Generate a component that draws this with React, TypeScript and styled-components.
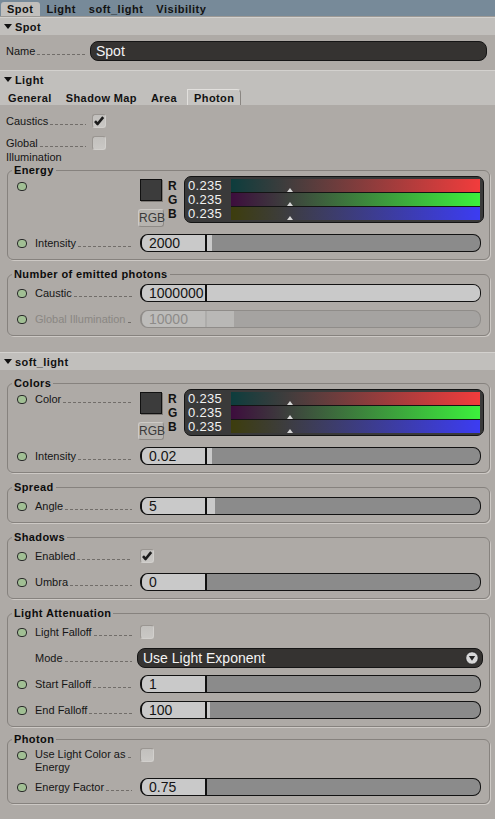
import React from "react";
import styled, { createGlobalStyle } from "styled-components";

const GlobalStyle = createGlobalStyle`
  body {
    margin: 0;
    background: #aeaaa6;
    font-family: "Liberation Sans", Arial, sans-serif;
    font-size: 11px;
    color: #121212;
  }
`;

const Page = styled.div`
  width: 495px;
  min-height: 819px;
  background: #aeaaa6;
`;

const TabBar = styled.div`
  display: flex;
  align-items: flex-end;
  height: 16px;
  padding-left: 1px;
  background: #778a99;
  border-bottom: 1px solid #9c9995;
`;

const Tab = styled.div<{ $active?: boolean }>`
  height: 14px;
  padding: 0 7px 0 6px;
  line-height: 14px;
  font-weight: bold;
  letter-spacing: 0.5px;
  border-radius: 3px 3px 0 0;
  background: ${(p) => (p.$active ? "#c1bfbc" : "transparent")};
`;

const Header = styled.div`
  display: flex;
  align-items: center;
  gap: 3px;
  height: 17px;
  padding-left: 4px;
  background: #c1bfbc;
  border-top: 1px solid #d3d1ce;
  font-weight: bold;
  letter-spacing: 0.4px;
`;

const Caret = styled.span`
  width: 0;
  height: 0;
  border-left: 4px solid transparent;
  border-right: 4px solid transparent;
  border-top: 5px solid #111;
`;

const SubTabs = styled.div`
  display: flex;
  align-items: flex-end;
  height: 17px;
  padding-left: 1px;
  background: #c1bfbc;
`;

const SubTab = styled.div<{ $active?: boolean }>`
  height: 16px;
  padding: 0 6px;
  line-height: 16px;
  font-weight: bold;
  letter-spacing: 0.4px;
  box-sizing: border-box;
  border: 1px solid transparent;
  border-bottom: 0;
  border-radius: 0 4px 0 0;
  ${(p) =>
    p.$active &&
    `
    margin-left: 3px;
    background: #c6c4c1;
    border-color: #e2e0dd #8a8682 transparent #e2e0dd;
  `}
`;

const Body = styled.div<{ $pad: string }>`
  padding: ${(p) => p.$pad};
`;

const TopRow = styled.div<{ $pt?: number }>`
  display: grid;
  grid-template-columns: 84px 1fr;
  align-items: ${(p) => (p.$pt ? "start" : "center")};
  min-height: 26px;
  padding: ${(p) => p.$pt ?? 0}px 8px 0 6px;
  box-sizing: border-box;
`;

const Row = styled.div<{ $pt?: number }>`
  display: grid;
  grid-template-columns: 123px 1fr;
  align-items: ${(p) => (p.$pt ? "start" : "center")};
  min-height: 26px;
  padding-top: ${(p) => p.$pt ?? 0}px;
  box-sizing: border-box;
`;

const LabelArea = styled.div`
  display: flex;
  align-items: flex-start;
`;

const Dot = styled.span<{ $hidden?: boolean }>`
  flex: none;
  width: 10px;
  height: 9px;
  margin: 3px 8px 0 0;
  box-sizing: border-box;
  border-radius: 4px;
  border: 1px solid ${(p) => (p.$hidden ? "transparent" : "#2a2a2a")};
  background: ${(p) => (p.$hidden ? "transparent" : "#a1bf94")};
`;

const LabelText = styled.div<{ $lh: number; $muted?: boolean }>`
  flex: 1;
  display: flex;
  flex-direction: column;
  line-height: ${(p) => p.$lh}px;
  color: ${(p) => (p.$muted ? "#8a8783" : "#151515")};
`;

const LabelLine = styled.div`
  display: flex;
`;

const Leader = styled.span<{ $end: number }>`
  flex: 1;
  align-self: flex-end;
  height: 1px;
  margin: 0 ${(p) => p.$end}px 3px 2px;
  background: repeating-linear-gradient(90deg, #716d69 0 3px, transparent 3px 5px);
`;

const Group = styled.fieldset<{ $mt?: number }>`
  margin: ${(p) => p.$mt ?? 9}px 5px 0 7px;
  padding: 0 5px 3px 9px;
  border: 1px solid #86827e;
  border-radius: 6px;
  box-shadow: 1px 1px 0 #cdc9c5;
  min-inline-size: 0;
`;

const Legend = styled.legend`
  margin-left: -5px;
  padding: 0 2px;
  font-size: 11px;
  line-height: 11px;
  font-weight: bold;
  letter-spacing: 0.4px;
  color: #0c0c0c;
`;

const DarkField = styled.div<{ $mr?: number; $ml?: number }>`
  display: flex;
  align-items: center;
  justify-content: space-between;
  height: 20px;
  margin: 0 ${(p) => p.$mr ?? 0}px 0 ${(p) => p.$ml ?? 0}px;
  padding: 0 3px 0 5px;
  box-sizing: border-box;
  background: #353331;
  border: 1px solid #151515;
  border-radius: 8px;
  font-size: 14px;
  color: #f4f4f4;
`;

const Check = styled.div<{ $ml?: number }>`
  width: 14px;
  height: 14px;
  margin-left: ${(p) => p.$ml ?? 0}px;
  box-sizing: border-box;
  border-radius: 3px;
  border: 1px solid;
  border-color: #9a9692 #d2d0cd #d2d0cd #9a9692;
  background: linear-gradient(#c2c0bd, #cac8c5);
  display: flex;
  align-items: center;
  justify-content: center;
`;

const SliderBox = styled.div<{ $off?: boolean }>`
  display: flex;
  height: 18px;
  margin-right: 3px;
  box-sizing: border-box;
  border: 1px solid ${(p) => (p.$off ? "#8f8c89" : "#121212")};
  border-left-width: 2px;
  border-radius: 8px;
  overflow: hidden;
  background: ${(p) => (p.$off ? "#a5a3a1" : "#8b8b8b")};
`;

const SliderValue = styled.div<{ $off?: boolean }>`
  width: 63px;
  padding-left: 7px;
  box-sizing: border-box;
  font-size: 14px;
  line-height: 16px;
  background: ${(p) => (p.$off ? "#bdbcba" : "#c9c9c9")};
  color: ${(p) => (p.$off ? "#8d8b89" : "#141414")};
`;

const Thumb = styled.div<{ $off?: boolean }>`
  width: 2px;
  background: ${(p) => (p.$off ? "#adacaa" : "#101010")};
`;

const Track = styled.div`
  flex: 1;
  display: flex;
`;

const Fill = styled.div<{ $off?: boolean }>`
  background: ${(p) => (p.$off ? "#b9b8b6" : "#c9c9c9")};
`;

const ColorBlock = styled.div`
  display: grid;
  grid-template-columns: 123px 24px 20px 1fr;
  margin-bottom: 3px;
`;

const ColorLabel = styled.div`
  padding-top: 3px;
`;

const SwatchCol = styled.div`
  display: flex;
  flex-direction: column;
`;

const Swatch = styled.div`
  width: 22px;
  height: 22px;
  margin-top: 3px;
  box-sizing: border-box;
  background: #3c3c3c;
  border: 1px solid #111;
  box-shadow: 1px 1px 0 #7d7975;
`;

const RgbButton = styled.div`
  width: 26px;
  height: 18px;
  margin: 8px 0 0 -2px;
  box-sizing: border-box;
  border: 1px solid;
  border-color: #cdcac6 #8f8b87 #8f8b87 #cdcac6;
  border-radius: 3px;
  background: #b6b3af;
  font-size: 12px;
  line-height: 16px;
  text-align: center;
  color: #3a3a3a;
`;

const Letters = styled.div`
  display: grid;
  grid-template-rows: repeat(3, 14px);
  padding: 3px 0 0 4px;
  font-size: 12px;
  line-height: 14px;
  font-weight: bold;
`;

const ColorField = styled.div`
  display: grid;
  grid-template-columns: 46px 1fr;
  height: 47px;
  padding: 2px 3px 2px 0;
  box-sizing: border-box;
  background: #3a3a3a;
  border: 1px solid #141414;
  border-radius: 7px;
`;

const Values = styled.div`
  display: grid;
  grid-template-rows: repeat(3, 13px);
  row-gap: 1px;
  padding-left: 3px;
  font-size: 13px;
  line-height: 13px;
  letter-spacing: 0.3px;
  color: #f2f2f2;
`;

const Bars = styled.div`
  display: flex;
  flex-direction: column;
  gap: 1px;
  background: #141414;
`;

const Bar = styled.div<{ $from: string; $to: string }>`
  position: relative;
  height: 13px;
  background: linear-gradient(to right, ${(p) => p.$from}, ${(p) => p.$to});
  &::after {
    content: "";
    position: absolute;
    left: calc(23.5% - 3px);
    bottom: 0;
    border-left: 3px solid transparent;
    border-right: 3px solid transparent;
    border-bottom: 4px solid #d6d6d6;
  }
`;

function CheckMark() {
  return (
    <svg width="12" height="12" viewBox="0 0 12 12">
      <path d="M2 6.2 L4.6 9 L10.2 2.2" fill="none" stroke="#1c1c1c" strokeWidth="2.6" strokeLinejoin="round" />
    </svg>
  );
}

function DropArrow() {
  return (
    <svg width="14" height="14" viewBox="0 0 14 14">
      <circle cx="7" cy="7" r="6.3" fill="#d8d8d8" stroke="#202020" strokeWidth="1" />
      <path d="M3.8 5 H10.2 L7 9.8 Z" fill="#262626" />
    </svg>
  );
}

type LabelProps = { text?: string; second?: string; dot?: boolean; muted?: boolean; lh?: number };

function GroupLabel({ text, second, dot = true, muted, lh = 14 }: LabelProps) {
  return (
    <LabelArea>
      <Dot $hidden={!dot} />
      {text && (
        <LabelText $lh={lh} $muted={muted}>
          <LabelLine>
            {text}
            <Leader $end={8} />
          </LabelLine>
          {second && <div>{second}</div>}
        </LabelText>
      )}
    </LabelArea>
  );
}

function TopLabel({ text, second }: { text: string; second?: string }) {
  return (
    <LabelText $lh={14}>
      <LabelLine>
        {text}
        <Leader $end={4} />
      </LabelLine>
      {second && <div>{second}</div>}
    </LabelText>
  );
}

function Slider({ value, fill, off }: { value: string; fill: number; off?: boolean }) {
  return (
    <SliderBox $off={off}>
      <SliderValue $off={off}>{value}</SliderValue>
      <Thumb $off={off} />
      <Track>
        <Fill $off={off} style={{ width: `${fill}%` }} />
      </Track>
    </SliderBox>
  );
}

function ColorRow({ label }: { label?: string }) {
  return (
    <ColorBlock>
      <ColorLabel>
        <GroupLabel text={label} />
      </ColorLabel>
      <SwatchCol>
        <Swatch />
        <RgbButton>RGB</RgbButton>
      </SwatchCol>
      <Letters>
        <span>R</span>
        <span>G</span>
        <span>B</span>
      </Letters>
      <ColorField>
        <Values>
          <span>0.235</span>
          <span>0.235</span>
          <span>0.235</span>
        </Values>
        <Bars>
          <Bar $from="#0d3d3d" $to="#f23c3c" />
          <Bar $from="#3d0d3d" $to="#3cf03c" />
          <Bar $from="#3d3d0d" $to="#3c3cf2" />
        </Bars>
      </ColorField>
    </ColorBlock>
  );
}

export default function App() {
  return (
    <Page>
      <GlobalStyle />
      <TabBar>
        <Tab $active>Spot</Tab>
        <Tab>Light</Tab>
        <Tab>soft_light</Tab>
        <Tab>Visibility</Tab>
      </TabBar>

      <Header>
        <Caret />
        Spot
      </Header>
      <Body $pad="3px 0 6px">
        <TopRow>
          <TopLabel text="Name" />
          <DarkField>Spot</DarkField>
        </TopRow>
      </Body>

      <Header>
        <Caret />
        Light
      </Header>
      <SubTabs>
        <SubTab>General</SubTab>
        <SubTab>Shadow Map</SubTab>
        <SubTab>Area</SubTab>
        <SubTab $active>Photon</SubTab>
      </SubTabs>
      <Body $pad="3px 0 16px">
        <TopRow>
          <TopLabel text="Caustics" />
          <Check $ml={2}>
            <CheckMark />
          </Check>
        </TopRow>
        <TopRow $pt={2}>
          <TopLabel text="Global" second="Illumination" />
          <Check $ml={2} />
        </TopRow>

        <Group $mt={1}>
          <Legend>Energy</Legend>
          <ColorRow />
          <Row>
            <GroupLabel text="Intensity" />
            <Slider value="2000" fill={2} />
          </Row>
        </Group>

        <Group>
          <Legend>Number of emitted photons</Legend>
          <Row>
            <GroupLabel text="Caustic" />
            <Slider value="1000000" fill={100} />
          </Row>
          <Row>
            <GroupLabel text="Global Illumination" muted />
            <Slider value="10000" fill={10} off />
          </Row>
        </Group>
      </Body>

      <Header>
        <Caret />
        soft_light
      </Header>
      <Body $pad="0 0 16px">
        <Group $mt={8}>
          <Legend>Colors</Legend>
          <ColorRow label="Color" />
          <Row>
            <GroupLabel text="Intensity" />
            <Slider value="0.02" fill={2} />
          </Row>
        </Group>

        <Group>
          <Legend>Spread</Legend>
          <Row>
            <GroupLabel text="Angle" />
            <Slider value="5" fill={3} />
          </Row>
        </Group>

        <Group>
          <Legend>Shadows</Legend>
          <Row>
            <GroupLabel text="Enabled" />
            <Check>
              <CheckMark />
            </Check>
          </Row>
          <Row>
            <GroupLabel text="Umbra" />
            <Slider value="0" fill={0} />
          </Row>
        </Group>

        <Group>
          <Legend>Light Attenuation</Legend>
          <Row>
            <GroupLabel text="Light Falloff" />
            <Check />
          </Row>
          <Row>
            <GroupLabel text="Mode" dot={false} />
            <DarkField $ml={-3} $mr={1}>
              Use Light Exponent
              <DropArrow />
            </DarkField>
          </Row>
          <Row>
            <GroupLabel text="Start Falloff" />
            <Slider value="1" fill={0} />
          </Row>
          <Row>
            <GroupLabel text="End Falloff" />
            <Slider value="100" fill={1} />
          </Row>
        </Group>

        <Group $mt={7}>
          <Legend>Photon</Legend>
          <Row $pt={3}>
            <GroupLabel text="Use Light Color as" second="Energy" lh={13} />
            <Check />
          </Row>
          <Row>
            <GroupLabel text="Energy Factor" />
            <Slider value="0.75" fill={0} />
          </Row>
        </Group>
      </Body>
    </Page>
  );
}
